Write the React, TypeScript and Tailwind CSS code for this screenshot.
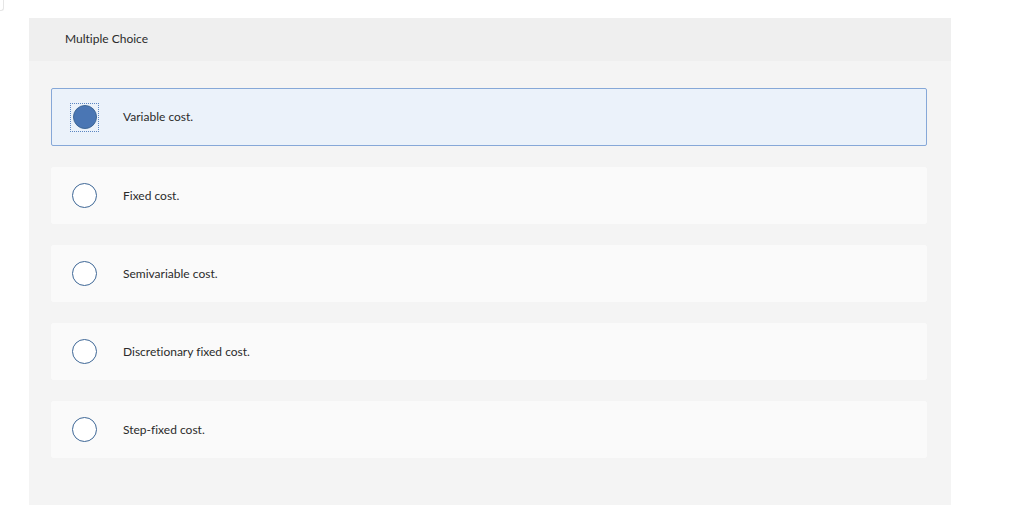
import React, { useState } from 'react';

const options = [
  'Variable cost.',
  'Fixed cost.',
  'Semivariable cost.',
  'Discretionary fixed cost.',
  'Step-fixed cost.',
];

export default function App() {
  const [selected, setSelected] = useState(0);

  return (
    <div className="relative w-[1024px] h-[525px] bg-white font-['Lato',sans-serif] text-[#2b2b2b] [font-variant-ligatures:none]">
      {/* leftover edge of a panel off-screen */}
      <div className="absolute left-0 top-0 w-[4px] h-[11px] border-r border-b border-[#e6e6e6] rounded-br-[3px]" />

      <div className="pt-[18px] pl-[29px]">
        <div className="w-[922px] h-[487px] bg-[#f4f4f4]">
          <div className="h-[43px] bg-[#efefef] flex items-center pl-[36px] pb-[2px] text-[12px]">
            Multiple Choice
          </div>

          <div className="px-[22px] pt-[27px] flex flex-col gap-[21px]">
            {options.map((opt, i) => {
              const isSel = i === selected;
              return (
                <button
                  key={opt}
                  onClick={() => setSelected(i)}
                  className={`w-[876px] flex items-center text-left rounded-[2px] ${
                    isSel
                      ? 'h-[58px] bg-[#ebf2fa] border border-[#86a8d8]'
                      : 'h-[57px] bg-[#fafafa] border border-[#fafafa]'
                  }`}
                >
                  <span className="w-[71px] pr-[6px] flex justify-center">
                    {isSel ? (
                      <span className="w-[29px] h-[29px] flex items-center justify-center border border-dotted border-[#5b86c2]">
                        <span className="w-[24px] h-[24px] rounded-full bg-[#4a76b4] border border-[#3e6796]" />
                      </span>
                    ) : (
                      <span className="w-[25px] h-[25px] rounded-full bg-white border border-[#3e6796]" />
                    )}
                  </span>
                  <span className="text-[12px]">{opt}</span>
                </button>
              );
            })}
          </div>
        </div>
      </div>
    </div>
  );
}
